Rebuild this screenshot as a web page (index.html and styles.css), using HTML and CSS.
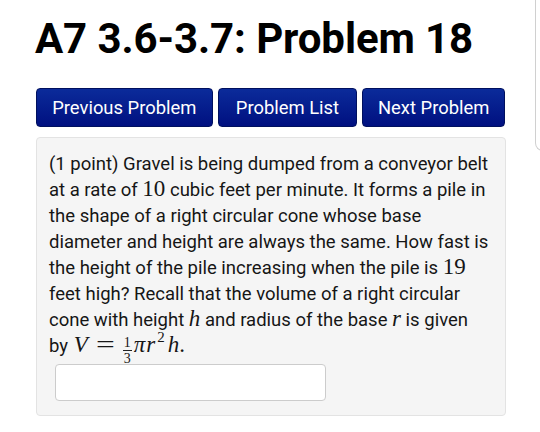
FILE: index.html
```html
<!DOCTYPE html>
<html>
<head>
<meta charset="utf-8">
<link rel="stylesheet" href="styles.css">
</head>
<body>
<div class="page">
  <h1 class="title">A7 3.6-3.7: Problem 18</h1>
  <div class="nav">
    <a class="btn btn-prev">Previous Problem</a>
    <a class="btn btn-list">Problem List</a>
    <a class="btn btn-next">Next Problem</a>
  </div>
  <div class="panel">
    <p class="problem">(1 point) Gravel is being dumped from a conveyor belt at a rate of <span class="mn">10</span> cubic feet per minute. It forms a pile in the shape of a right circular cone whose base diameter and height are always the same. How fast is the height of the pile increasing when the pile is <span class="mn">19</span> feet high? Recall that the volume of a right circular cone with height <span class="mi">h</span> and radius of the base <span class="mi">r</span> is given <span class="nowrap">by <span class="math"><span class="mi">V</span><span class="mo">=</span><span class="frac"><span class="num">1</span><span class="den">3</span></span><span class="mi pi">π</span><span class="mi">r</span><span class="sup">2</span><span class="mi">h</span>.</span></span></p>
    <div class="answer"></div>
  </div>
</div>
<div class="edge"></div>
</body>
</html>
```
FILE: styles.css
```css
html, body {
  margin: 0;
  padding: 0;
  background: #fff;
}
body {
  font-family: Roboto, "Noto Sans", sans-serif;
  color: #111;
  width: 540px;
  height: 432px;
  overflow: hidden;
  position: relative;
}
.page {
  padding: 0 35px 0 35px;
}
.title {
  margin: 0;
  padding-top: 14px;
  font-size: 42px;
  font-weight: 700;
  line-height: 50px;
  color: #000;
  letter-spacing: -0.1px;
}
.nav {
  display: flex;
  gap: 5px;
  margin-top: 24px;
  margin-left: 1px;
}
.btn {
  box-sizing: border-box;
  display: flex;
  align-items: center;
  justify-content: center;
  height: 39px;
  border: 1px solid #00105e;
  border-radius: 4px;
  background: linear-gradient(#0b2b9a, #001080);
  color: #fff;
  font-size: 18.4px;
}
.btn-prev { width: 177px; }
.btn-list { width: 140px; }
.btn-next { width: 143px; }
.panel {
  margin-top: 10px;
  margin-left: 1px;
  width: 448px;
  background: #f5f5f5;
  border: 1px solid #e3e3e3;
  border-radius: 4px;
  padding: 13px 8px 14px 12px;
}
.problem {
  margin: 0;
  font-size: 18.5px;
  line-height: 26px;
  color: #161616;
}
.nowrap {
  white-space: nowrap;
}
.mn {
  font-family: "Liberation Serif", "DejaVu Serif", serif;
  font-size: 23px;
  line-height: 20px;
}
.mi {
  font-family: "Liberation Serif", "DejaVu Serif", serif;
  font-style: italic;
  font-size: 23px;
  line-height: 20px;
}
.math {
  font-family: "Liberation Serif", serif;
  font-size: 23px;
  line-height: 20px;
  margin-left: 1px;
}
.mo {
  display: inline-block;
  font-family: "Liberation Serif", serif;
  font-size: 23px;
  transform: scaleX(1.45);
  margin: 0 11px 0 11px;
}
.frac {
  display: inline-block;
  vertical-align: -11px;
  font-family: "Liberation Serif", serif;
  font-size: 14px;
  line-height: 15px;
  margin: -6px 2px -12px 0;
}
.num {
  display: block;
  border-bottom: 1px solid #222;
  padding: 0 1px;
  text-align: center;
}
.den {
  display: block;
  text-align: center;
}
.pi {
  margin-right: 1px;
}
.sup {
  font-family: "Liberation Serif", serif;
  font-size: 15px;
  position: relative;
  top: -10px;
  margin: 0 3px 0 2px;
}
.answer {
  margin-top: 5px;
  margin-left: 6px;
  width: 269px;
  height: 35px;
  background: #fff;
  border: 1px solid #ccc;
  border-radius: 4px;
}
.edge {
  position: absolute;
  left: 535px;
  top: -10px;
  width: 20px;
  height: 160px;
  border-left: 1px solid #d0d0d0;
  border-bottom: 1px solid #d0d0d0;
  border-bottom-left-radius: 8px;
}
```
